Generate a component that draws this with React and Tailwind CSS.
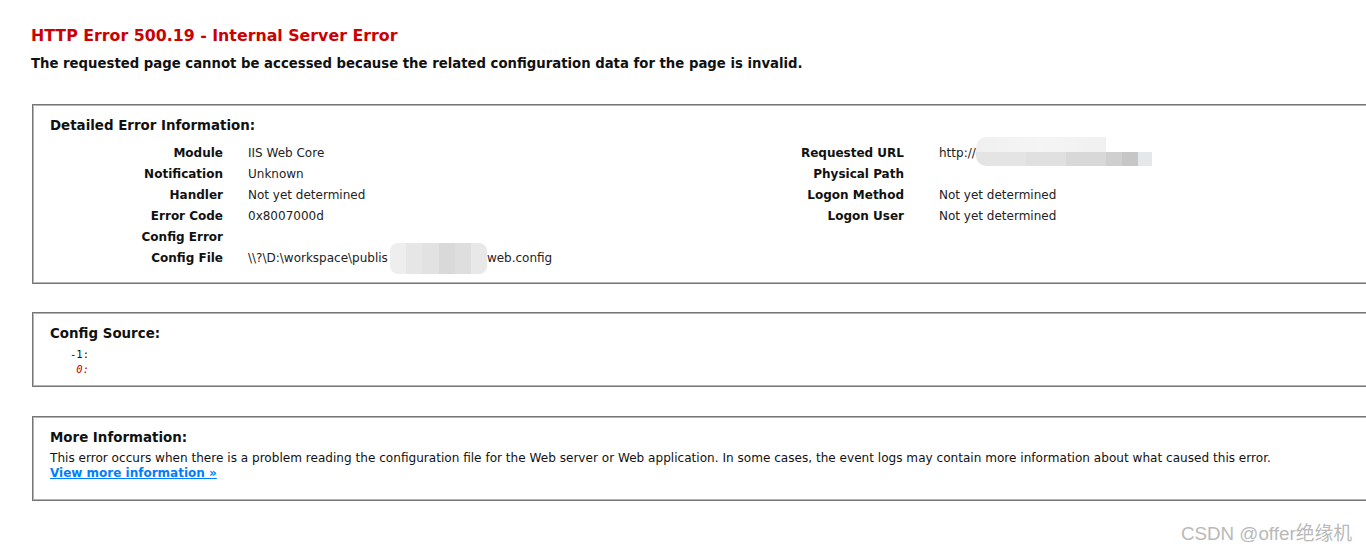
import React from "react";

const leftRows = [
  { label: "Module", value: "IIS Web Core" },
  { label: "Notification", value: "Unknown" },
  { label: "Handler", value: "Not yet determined" },
  { label: "Error Code", value: "0x8007000d" },
  { label: "Config Error", value: "" },
  { label: "Config File", value: "config" },
];

const rightRows = [
  { label: "Requested URL", value: "url" },
  { label: "Physical Path", value: "" },
  { label: "Logon Method", value: "Not yet determined" },
  { label: "Logon User", value: "Not yet determined" },
];

function Box({ children, className = "" }) {
  return (
    <div className={`w-[1400px] border border-[#767676] shadow-[inset_1px_1px_0_#b4b4b4,inset_-1px_-1px_0_#b4b4b4] pl-[17px] pt-[12px] ${className}`}>
      {children}
    </div>
  );
}

function Heading({ children }) {
  return <h4 className="h-[18px] leading-[18px] font-bold text-[13.4px] text-[#111]">{children}</h4>;
}

function ConfigFile() {
  return (
    <span className="relative">
      {"\\\\?\\D:\\workspace\\publis"}
      <span className="relative inline-block w-[99px] h-[12px] align-middle">
        <span className="absolute left-[2px] -top-[10px] w-[97px] h-[31px] rounded-[8px] overflow-hidden flex blur-[0.5px]">
          <span className="w-[16px] bg-[#eeeeee]" />
          <span className="w-[16px] bg-[#e6e6e6]" />
          <span className="w-[17px] bg-[#e2e2e2]" />
          <span className="w-[16px] bg-[#d9d9d9]" />
          <span className="w-[16px] bg-[#dedede]" />
          <span className="w-[16px] bg-[#e8e8e8]" />
        </span>
      </span>
      web.config
    </span>
  );
}

function Url() {
  return (
    <span className="relative">
      http://
      <span className="relative inline-block w-[170px] h-[12px] align-middle">
        <span className="absolute left-0 -top-[11px] w-[176px] h-[29px] rounded-l-[10px] overflow-hidden flex flex-col">
          <span className="h-[15px] flex">
            <span className="w-[130px] bg-[linear-gradient(90deg,#f0f0f0,#f5f5f5_50%,#f0f0f0)]" />
          </span>
          <span className="h-[14px] flex">
            <span className="w-[50px] bg-[#e4e4e4]" />
            <span className="w-[40px] bg-[#e0e0e0]" />
            <span className="w-[40px] bg-[#d8d8d8]" />
            <span className="w-[16px] bg-[#cfcfcf]" />
            <span className="w-[16px] bg-[#c6c6c6]" />
            <span className="w-[14px] bg-[#e5e8ea]" />
          </span>
        </span>
      </span>
    </span>
  );
}

function Row({ label, value, labelW, gap }) {
  return (
    <div className="flex h-[21px] leading-[21px]">
      <div className={`${labelW} shrink-0 text-right font-bold text-[#111]`}>{label}</div>
      <div className={`${gap} text-[#222]`}>
        {value === "config" ? <ConfigFile /> : value === "url" ? <Url /> : value}
      </div>
    </div>
  );
}

export default function App() {
  return (
    <div className="relative h-[555px] overflow-hidden bg-white text-[12px] text-black font-['DejaVu_Sans',Verdana,sans-serif]">
      <div className="pl-[31px] pt-[26px]">
        <h3 className="h-[20px] leading-[20px] text-[15.8px] font-bold text-[#CC0000]">
          HTTP Error 500.19 - Internal Server Error
        </h3>
        <h4 className="mt-[9px] h-[18px] leading-[18px] text-[13.25px] font-bold text-[#111]">
          The requested page cannot be accessed because the related configuration data for the page is invalid.
        </h4>

        <div className="mt-[31px] ml-[1px] flex flex-col gap-[28px]">
          <Box className="pb-[14px]">
            <Heading>Detailed Error Information:</Heading>
            <div className="mt-[8px] flex">
              <div className="w-[600px] shrink-0">
                {leftRows.map((r) => (
                  <Row key={r.label} {...r} labelW="w-[173px]" gap="pl-[25px]" />
                ))}
              </div>
              <div>
                {rightRows.map((r) => (
                  <Row key={r.label} {...r} labelW="w-[254px]" gap="pl-[35px]" />
                ))}
              </div>
            </div>
          </Box>

          <Box className="pb-[9px]">
            <Heading>Config Source:</Heading>
            <pre className="mt-[4px] pl-[20px] font-['DejaVu_Sans_Mono',monospace] text-[10.5px] leading-[15px]">
              <div className="text-[#111]">-1:</div>
              <div className="text-[#CC0000] italic">{" 0:"}</div>
            </pre>
          </Box>

          <Box className="mt-[1px] pb-[19px]">
            <Heading>More Information:</Heading>
            <div className="mt-[4px] leading-[15px] text-[12.08px] text-[#111]">
              This error occurs when there is a problem reading the configuration file for the Web server or Web application. In some cases, the event logs may contain more information about what caused this error.
            </div>
            <a href="#" className="block leading-[15px] font-bold text-[#007EFF] underline">
              View more information »
            </a>
          </Box>
        </div>
      </div>

      <div className="absolute right-[14px] bottom-[7px] text-[18.8px] text-[#b9b9b9] font-['Liberation_Sans','Noto_Sans_CJK_SC',sans-serif]">
        CSDN @offer绝缘机
      </div>
    </div>
  );
}
